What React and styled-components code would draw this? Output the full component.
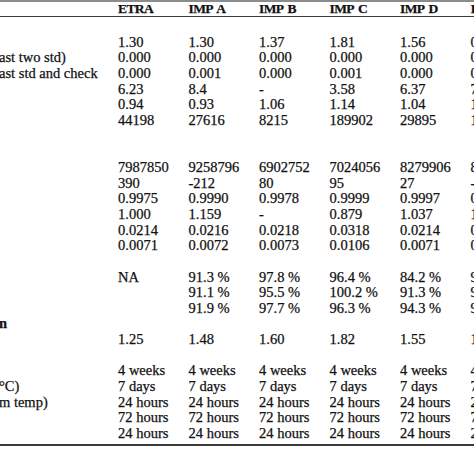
import React from "react";
import styled, { createGlobalStyle } from "styled-components";

const Global = createGlobalStyle`
  html, body { margin: 0; padding: 0; background: #fff; overflow: hidden; }
  body { width: 474px; height: 474px; }
`;

const Page = styled.div`
  width: 474px;
  height: 474px;
  overflow: hidden;
  background: #fff;
  color: #111;
  font-family: "Liberation Serif", "Times New Roman", serif;
  -webkit-text-stroke: 0.25px #111;
`;

const Table = styled.div`
  width: 540px;
  border-top: 2px solid #8c8c8c;
  border-bottom: 2px solid #3a3a3a;
  padding-bottom: 2px;
`;

const cols = "118px 70.5px 70.5px 70.5px 70.5px 70.5px 70.5px";

const HeadRow = styled.div`
  display: grid;
  grid-template-columns: ${cols};
  height: 14px;
  line-height: 14px;
  font-size: 13.5px;
  font-weight: bold;
  letter-spacing: -0.6px;
  word-spacing: 2px;
  border-bottom: 1px solid #3c3c3c;
`;

const Body = styled.div`
  padding-top: 2px;
`;

const Row = styled.div`
  display: grid;
  grid-template-columns: ${cols};
  height: 15.67px;
  line-height: 15.67px;
  font-size: 14.5px;
`;

const Cell = styled.div`
  white-space: nowrap;
`;

const Label = styled.div`
  white-space: nowrap;
  margin-left: -1px;
  font-weight: ${(p) => (p.$bold ? "bold" : "normal")};
`;

const heads = ["ETRA", "IMP A", "IMP B", "IMP C", "IMP D", "IMP E"];

const rows = [
  [""],
  ["", "1.30", "1.30", "1.37", "1.81", "1.56", "0.98"],
  ["ast two std)", "0.000", "0.000", "0.000", "0.000", "0.000", "0.000"],
  ["ast std and check", "0.000", "0.001", "0.000", "0.001", "0.000", "0.000"],
  ["", "6.23", "8.4", "-", "3.58", "6.37", "7.12"],
  ["", "0.94", "0.93", "1.06", "1.14", "1.04", "1.02"],
  ["", "44198", "27616", "8215", "189902", "29895", "15230"],
  [""],
  [""],
  ["", "7987850", "9258796", "6902752", "7024056", "8279906", "8102345"],
  ["", "390", "-212", "80", "95", "27", "-45"],
  ["", "0.9975", "0.9990", "0.9978", "0.9999", "0.9997", "0.9995"],
  ["", "1.000", "1.159", "-", "0.879", "1.037", "1.012"],
  ["", "0.0214", "0.0216", "0.0218", "0.0318", "0.0214", "0.0215"],
  ["", "0.0071", "0.0072", "0.0073", "0.0106", "0.0071", "0.0072"],
  [""],
  ["", "NA", "91.3 %", "97.8 %", "96.4 %", "84.2 %", "92.1 %"],
  ["", "", "91.1 %", "95.5 %", "100.2 %", "91.3 %", "93.4 %"],
  ["", "", "91.9 %", "97.7 %", "96.3 %", "94.3 %", "95.0 %"],
  ["n", null, "", "", "", "", ""],
  ["", "1.25", "1.48", "1.60", "1.82", "1.55", "1.40"],
  [""],
  ["", "4 weeks", "4 weeks", "4 weeks", "4 weeks", "4 weeks", "4 weeks"],
  ["°C)", "7 days", "7 days", "7 days", "7 days", "7 days", "7 days"],
  ["m temp)", "24 hours", "24 hours", "24 hours", "24 hours", "24 hours", "24 hours"],
  ["", "72 hours", "72 hours", "72 hours", "72 hours", "72 hours", "72 hours"],
  ["", "24 hours", "24 hours", "24 hours", "24 hours", "24 hours", "24 hours"],
];

export default function App() {
  return (
    <Page>
      <Global />
      <Table>
        <HeadRow>
          <Cell />
          {heads.map((h) => (
            <Cell key={h}>{h}</Cell>
          ))}
        </HeadRow>
        <Body>
          {rows.map((r, i) => (
            <Row key={i}>
              <Label $bold={r[1] === null}>{r[0]}</Label>
              {r.slice(1).map((v, j) => (
                <Cell key={j}>{v}</Cell>
              ))}
            </Row>
          ))}
        </Body>
      </Table>
    </Page>
  );
}
